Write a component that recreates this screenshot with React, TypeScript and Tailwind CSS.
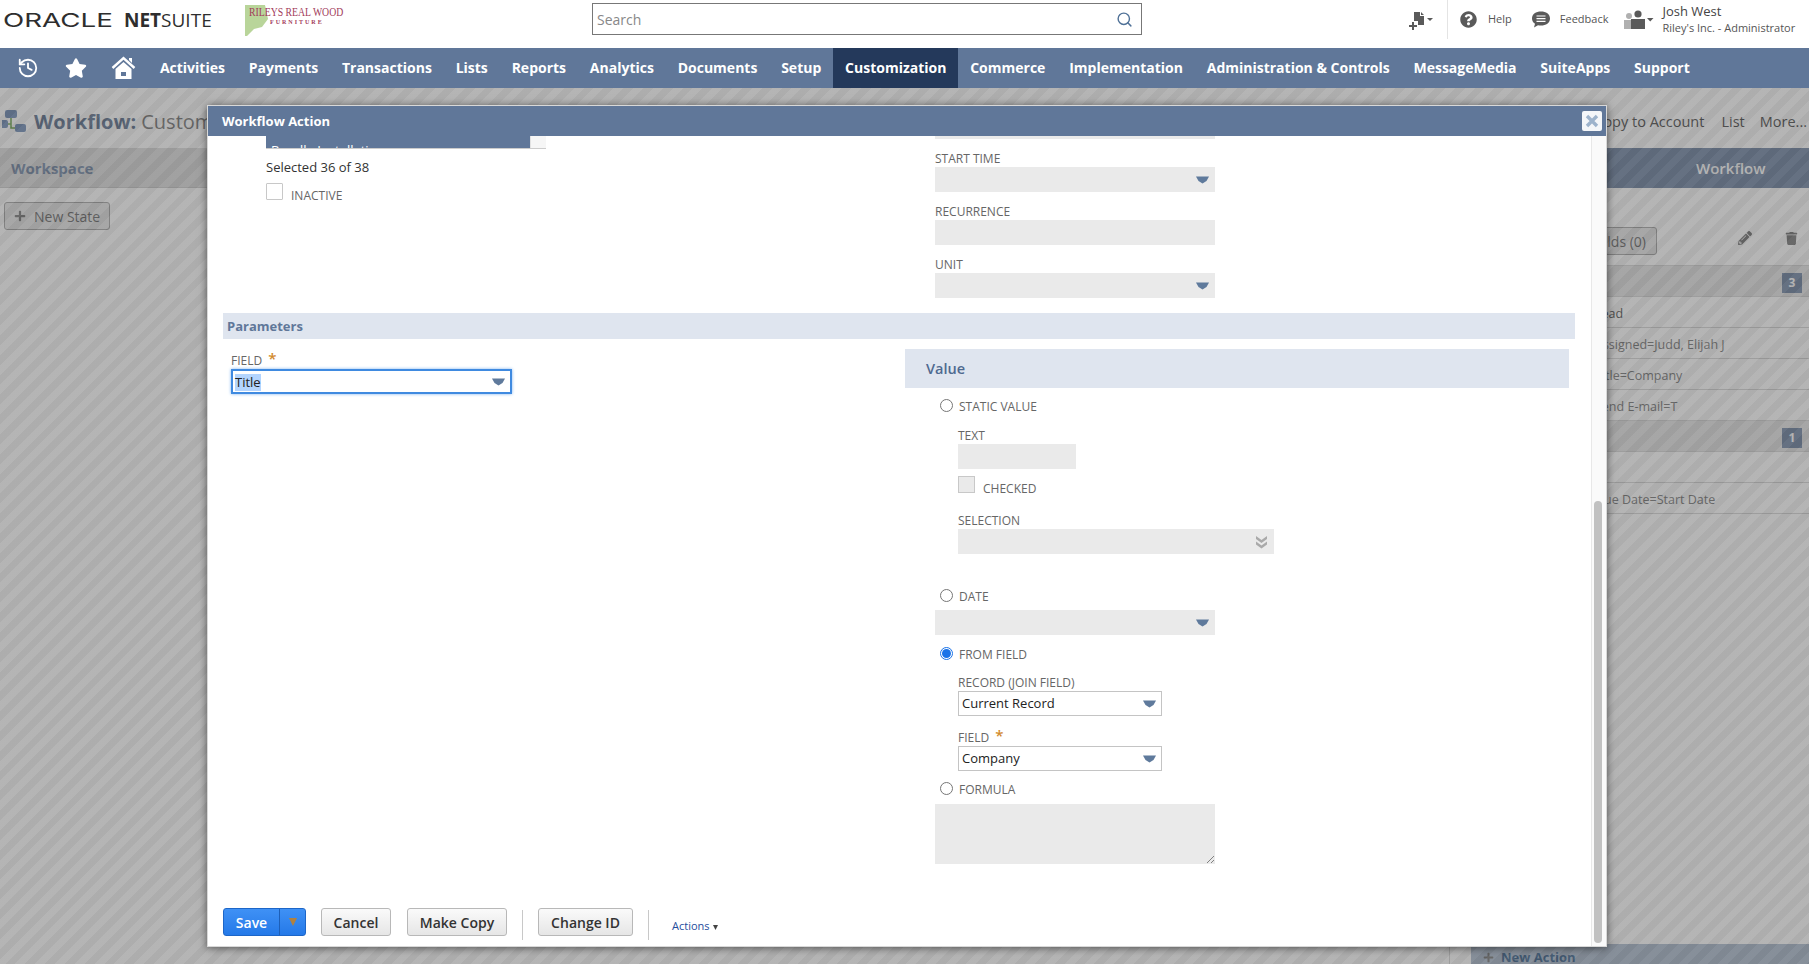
import { FaPencilAlt, FaPlus, FaStar, FaTrash, FaQuestionCircle } from 'react-icons/fa'
import { History, Search } from 'lucide-react'

const navItems = ['Activities', 'Payments', 'Transactions', 'Lists', 'Reports', 'Analytics', 'Documents', 'Setup', 'Customization', 'Commerce', 'Implementation', 'Administration & Controls', 'MessageMedia', 'SuiteApps', 'Support']

const Arrow = () => (
  <svg width="13" height="8" viewBox="0 0 13 8" className="shrink-0">
    <path d="M0 0.5 H13 L10.5 5 L6.5 7.5 L2.5 5 Z" fill="#5f7a9c" />
  </svg>
)

const Label = ({ text, required }: { text: string; required?: boolean }) => (
  <div className="h-[18px] leading-[20px] text-[12px] text-[#666] flex">
    {text}
    {required && <span className="ml-[6px] text-[#d28a2c] text-[15px] leading-[15px] font-semibold">*</span>}
  </div>
)

const GreyBox = ({ width, arrow }: { width: string; arrow?: boolean }) => (
  <div className={`${width} h-[25px] bg-[#eaeaea] flex items-center justify-end pr-[6px]`}>
    {arrow && <Arrow />}
  </div>
)

const SelectBox = ({ value }: { value: string }) => (
  <div className="w-[204px] h-[25px] border border-[#c4c4c4] bg-white flex items-center justify-between pl-[3px] pr-[5px] text-[13px] text-[#222]">
    {value}
    <Arrow />
  </div>
)

const Radio = ({ text, checked }: { text: string; checked?: boolean }) => (
  <div className="h-[18px] flex items-center pl-[35px] text-[12px] text-[#666]">
    {checked ? (
      <span className="w-[13px] h-[13px] rounded-full border border-[#1a73e8] flex items-center justify-center mr-[6px] -mt-[2px]">
        <span className="w-[9px] h-[9px] rounded-full bg-[#1a73e8]" />
      </span>
    ) : (
      <span className="w-[13px] h-[13px] rounded-full border border-[#767676] bg-white mr-[6px] -mt-[2px]" />
    )}
    <span className="mt-[2px]">{text}</span>
  </div>
)

const FooterButton = ({ text, width }: { text: string; width: string }) => (
  <button
    type="button"
    className={`${width} h-[28px] rounded-[3px] border border-[#b8b8b8] bg-gradient-to-b from-[#fafafa] to-[#e6e6e6] text-[14px] font-semibold text-[#333]`}
  >
    {text}
  </button>
)

const PanelRow = ({ text, dark }: { text: string; dark?: boolean }) => (
  <div className={`h-[31px] border-b border-[#d0d0d0] pl-[145px] pt-[4px] flex items-center text-[12.5px] ${dark ? 'text-[#333]' : 'text-[#666]'}`}>
    {text}
  </div>
)

const PanelHead = ({ count }: { count: string }) => (
  <div className="h-[31px] border-b border-[#d0d0d0] bg-[#e2e2e2] flex items-center justify-end pr-[7px] pt-[3px]">
    <span className="w-[20px] h-[20px] bg-[#607799] text-white text-[12px] font-bold flex items-center justify-center">{count}</span>
  </div>
)

export default function App() {
  return (
    <div className="h-[964px] w-[1809px] overflow-hidden flex flex-col bg-white font-['Open_Sans',sans-serif]">
      {/* top bar */}
      <div className="h-[48px] flex items-start shrink-0">
        <div className="flex items-center h-[40px] pl-[3px] w-[245px] text-[#2e2e2e] text-[19px] leading-none">
          <span className="font-['Inter',sans-serif] font-normal scale-x-[1.46] origin-left w-[121px]">ORACLE</span>
          <span className="font-bold">NET</span>
          <span className="font-normal">SUITE</span>
        </div>
        <div className="relative w-[100px] h-[36px] mt-[3px] shrink-0">
          <svg width="24" height="31" viewBox="0 0 24 31" className="absolute left-0 top-[2px]">
            <path d="M0 0 H20 L23 14 L17 22 L9 24 L2 31 H0 Z" fill="#b9d59a" />
          </svg>
          <div className="absolute left-[4px] top-[1px] whitespace-nowrap font-['Liberation_Serif',serif] text-[13px] leading-[16px] text-[#a23a5a] scale-x-[0.75] origin-left">RILEYS REAL WOOD</div>
          <div className="absolute left-[25px] top-[15px] whitespace-nowrap font-['Liberation_Serif',serif] text-[6px] font-bold tracking-[2px] text-[#a23a5a]">FURNITURE</div>
        </div>
        <div className="ml-[247px] mt-[3px] w-[550px] h-[32px] border border-[#777] flex items-center justify-between pl-[4px] pr-[8px] text-[14px] text-[#888] shrink-0">
          Search
          <Search size={17} strokeWidth={2} color="#4f7197" />
        </div>
        <div className="ml-[267px] flex items-center h-[39px] text-[#555]">
          <svg width="24" height="20" viewBox="0 0 24 20" className="mt-[2px]">
            <path d="M5 1 H11 V5 H15 V14 H9 V10 H5 Z M12 1 L15 4 H12 Z" fill="#5a5a5a" />
            <path d="M3 11 H5 V14 H8 V16 H5 V19 H3 V16 H0 V14 H3 Z" fill="#5a5a5a" />
            <path d="M18 7 H24 L21 10 Z" fill="#5a5a5a" />
          </svg>
          <div className="w-px h-[39px] bg-[#e4e4e4] ml-[14px]" />
          <FaQuestionCircle size={17} color="#5a5a5a" className="ml-[12px]" />
          <span className="ml-[11px] text-[11px]">Help</span>
          <svg width="18" height="17" viewBox="0 0 18 17" className="ml-[20px]">
            <path d="M9 0.5 C14 0.5 18 3 18 7.5 C18 12 14 14.5 9 14.5 C8 14.5 7 14.4 6 14.2 L2 16.5 L3 12.8 C1 11.5 0 9.7 0 7.5 C0 3 4 0.5 9 0.5 Z" fill="#5a5a5a" />
            <path d="M4.5 5 H13.5 M4.5 7.7 H13.5 M4.5 10.4 H13.5" stroke="#fff" strokeWidth="1.2" />
          </svg>
          <span className="ml-[10px] text-[11px]">Feedback</span>
          <svg width="30" height="20" viewBox="0 0 30 20" className="ml-[16px]">
            <circle cx="5" cy="6" r="3" fill="#b0b0b0" />
            <path d="M0 10 H9 V19 H0 Z" fill="#b0b0b0" />
            <circle cx="14" cy="4" r="3.6" fill="#5a5a5a" />
            <path d="M7 9 H21 V19 H7 Z" fill="#5a5a5a" />
            <path d="M23 8 H29.5 L26.2 11.5 Z" fill="#5a5a5a" />
          </svg>
          <div className="ml-[8px] flex flex-col -mt-[1px]">
            <span className="text-[13px] leading-[16px] text-[#444]">Josh West</span>
            <span className="text-[11px] leading-[17px]">Riley's Inc. - Administrator</span>
          </div>
        </div>
      </div>

      {/* nav */}
      <div className="h-[40px] bg-[#607799] flex items-center text-white shrink-0">
        <History size={22} strokeWidth={2} className="ml-[17px]" />
        <FaStar size={22} className="ml-[26px]" />
        <svg width="25" height="24" viewBox="0 0 25 24" className="ml-[24px]">
          <path d="M1.5 12 L12.5 2 L23.5 12" fill="none" stroke="#fff" strokeWidth="2.4" />
          <path d="M18 2 H21 V7 L18 4 Z" fill="#fff" />
          <path d="M4.5 13 L12.5 6 L20.5 13 V23 H4.5 Z M10 16 V20 H15 V16 Z" fill="#fff" fillRule="evenodd" />
        </svg>
        <div className="ml-[12px] flex h-full text-[14px] font-bold">
          {navItems.map((item) => (
            <div key={item} className={`px-[11.9px] pb-[2px] flex items-center whitespace-nowrap ${item === 'Customization' ? 'bg-[#24395b]' : ''}`}>
              {item}
            </div>
          ))}
        </div>
      </div>

      {/* page under the dialog */}
      <div className="relative flex-1 flex flex-col min-h-0">
        <div className="h-[60px] shrink-0 flex items-center justify-between text-[14.5px] text-[#333] pl-[2px] pr-[2px] pt-[8px]">
          <div className="flex items-center">
            <svg width="24" height="26" viewBox="0 0 24 26">
              <path d="M9 8 V19 H14 M3 15 H9" stroke="#5c9a3a" strokeWidth="1.6" fill="none" />
              <rect x="3" y="1" width="12" height="8" rx="2" fill="#5f7fae" />
              <rect x="-2" y="11" width="8" height="8" rx="2" fill="#5f7fae" />
              <rect x="13" y="15" width="11" height="8" rx="2" fill="#5f7fae" />
            </svg>
            <span className="ml-[8px] text-[20px] font-bold text-[#4a5f80]">Workflow:</span>
            <span className="ml-[5px] text-[20px] text-[#666]">Customer</span>
          </div>
          <div className="flex">
            <span>Copy to Account</span>
            <span className="ml-[17px]">List</span>
            <span className="ml-[15px]">More...</span>
          </div>
        </div>
        <div className="flex-1 flex min-h-0">
          <div className="flex-1 flex flex-col">
            <div className="h-[40px] bg-[#d8d8d8] border-b border-[#c4c4c4] flex items-center pl-[11px] pt-[2px] text-[15px] font-bold text-[#607799]">Workspace</div>
            <button type="button" className="ml-[4px] mt-[14px] w-[106px] h-[28px] rounded-[3px] border border-[#999] bg-[#e4e4e4] flex items-center pl-[9px] text-[14px] text-[#555]">
              <FaPlus size={12} className="mr-[8px] text-[#666]" />
              New State
            </button>
          </div>
          <div className="w-[360px] flex flex-col border-l border-[#d0d0d0]">
            <div className="h-[40px] shrink-0 bg-[#607799] flex items-center pl-[246px] text-[15px] font-semibold text-white">Workflow</div>
            <div className="h-[78px] shrink-0 pt-[39px] pl-[51px] flex items-start border-b border-[#d0d0d0]">
              <div className="w-[156px] h-[28px] rounded-[3px] border border-[#999] bg-[#e4e4e4] text-[14px] text-[#555] flex items-center justify-end pr-[10px]">Fields (0)</div>
              <FaPencilAlt size={14} className="ml-[81px] mt-[4px] text-[#666]" />
              <FaTrash size={13} className="ml-[33px] mt-[5px] text-[#666]" />
            </div>
            <PanelHead count="3" />
            <PanelRow text="Lead" dark />
            <PanelRow text="Assigned=Judd, Elijah J" />
            <PanelRow text="Title=Company" />
            <PanelRow text="Send E-mail=T" />
            <PanelHead count="1" />
            <PanelRow text="" />
            <PanelRow text="Due Date=Start Date" />
            <div className="mt-auto ml-[21px] h-[20px] bg-[#a3b4c9] flex items-center pl-[12px] pt-[7px] text-[13px] font-bold text-[#24507f]">
              <FaPlus size={11} className="mr-[7px] text-[#666]" />
              New Action
            </div>
          </div>
        </div>

        {/* striped mask */}
        <div className="absolute inset-0 bg-[repeating-linear-gradient(135deg,rgba(107,107,107,0.5)_0px,rgba(107,107,107,0.5)_7px,rgba(92,92,92,0.5)_7px,rgba(92,92,92,0.5)_14px)]" />

        {/* dialog */}
        <div className="absolute left-[207px] top-[17px] w-[1400px] h-[842px] bg-white border border-[#d8d8d8] shadow-[0_1px_8px_rgba(0,0,0,0.55)] flex flex-col">
          <div className="h-[30px] shrink-0 bg-[#607799] flex items-center pl-[14px] pt-[1px] text-[13px] font-bold text-white relative z-10">
            Workflow Action
            <div className="absolute right-[4px] top-[5px] w-[20px] h-[20px] rounded-[2px] bg-[#f4f6f9] flex items-center justify-center">
              <svg width="14" height="14" viewBox="0 0 14 14">
                <path d="M2 2 L12 12 M12 2 L2 12" stroke="#9db3cc" strokeWidth="3.4" />
              </svg>
            </div>
          </div>
          <div className="flex-1 flex min-h-0">
            <div className="flex-1 flex flex-col min-w-0 pl-[15px] pr-[16px]">
              <div className="flex-1 min-h-0 overflow-hidden">
                <div className="h-[177px] flex">
                  <div className="w-[712px] pl-[43px]">
                    <div className="w-[280px] h-[13px] flex border-b border-[#ccc] overflow-hidden">
                      <div className="w-[264px] bg-[#607799] pl-[5px] pt-[5px] text-[13px] leading-[18px] text-white">Bundle Installation</div>
                      <div className="w-[16px] bg-[#f6f6f6] border-l border-[#e2e2e2]" />
                    </div>
                    <div className="mt-[9px] h-[18px] leading-[18px] text-[13px] text-[#333]">Selected 36 of 38</div>
                    <div className="mt-[7px] flex">
                      <span className="w-[17px] h-[17px] border border-[#c8c8c8] rounded-[1px]" />
                      <span className="ml-[8px] mt-[4px] text-[12px] leading-[18px] text-[#666]">INACTIVE</span>
                    </div>
                  </div>
                  <div className="w-[280px]">
                    <div className="h-[3px] bg-[#eaeaea]" />
                    <div className="mt-[10px]"><Label text="START TIME" /><GreyBox width="w-[280px]" arrow /></div>
                    <div className="mt-[10px]"><Label text="RECURRENCE" /><GreyBox width="w-[280px]" /></div>
                    <div className="mt-[10px]"><Label text="UNIT" /><GreyBox width="w-[280px]" arrow /></div>
                  </div>
                </div>
                <div className="h-[26px] bg-[#dfe5ef] flex items-center pl-[4px] pt-[2px] text-[13px] font-bold text-[#607799]">Parameters</div>
                <div className="mt-[10px] flex">
                  <div className="w-[682px] pl-[8px] pt-[2px]">
                    <Label text="FIELD" required />
                    <div className="w-[281px] h-[25px] border-2 border-[#3f8ae0] shadow-[0_0_3px_#7fb2ee] bg-white flex items-center justify-between pl-[2px] pr-[5px] text-[13px] text-[#222]">
                      <span className="bg-[#b4d5fe] mt-[2px] leading-[17px]">Title</span>
                      <Arrow />
                    </div>
                  </div>
                  <div className="w-[664px]">
                    <div className="h-[39px] bg-[#dfe5ef] flex items-center pl-[21px] text-[14.5px] font-semibold text-[#4f6a90]">Value</div>
                    <div className="mt-[9px]"><Radio text="STATIC VALUE" /></div>
                    <div className="mt-[11px] pl-[53px]">
                      <Label text="TEXT" />
                      <GreyBox width="w-[118px]" />
                      <div className="mt-[7px] flex">
                        <span className="w-[17px] h-[17px] border border-[#c8c8c8] bg-[#eaeaea]" />
                        <span className="ml-[8px] mt-[4px] text-[12px] leading-[18px] text-[#666]">CHECKED</span>
                      </div>
                      <div className="mt-[13px]">
                        <Label text="SELECTION" />
                        <div className="w-[316px] h-[25px] bg-[#eaeaea] flex items-center justify-end pr-[6px]">
                          <svg width="13" height="14" viewBox="0 0 13 14">
                            <path d="M1 1 L6.5 5 L12 1 V4 L6.5 8 L1 4 Z M1 6.5 L6.5 10.5 L12 6.5 V9.5 L6.5 13.5 L1 9.5 Z" fill="#a9a9a9" />
                          </svg>
                        </div>
                      </div>
                    </div>
                    <div className="mt-[33px]"><Radio text="DATE" /></div>
                    <div className="mt-[5px] pl-[30px]"><GreyBox width="w-[280px]" arrow /></div>
                    <div className="mt-[10px]"><Radio text="FROM FIELD" checked /></div>
                    <div className="mt-[10px] pl-[53px]">
                      <Label text="RECORD (JOIN FIELD)" />
                      <SelectBox value="Current Record" />
                      <div className="mt-[12px]">
                        <Label text="FIELD" required />
                        <SelectBox value="Company" />
                      </div>
                    </div>
                    <div className="mt-[9px]"><Radio text="FORMULA" /></div>
                    <div className="mt-[6px] ml-[30px] w-[280px] h-[60px] bg-[#eaeaea] flex items-end justify-end">
                      <svg width="9" height="9" viewBox="0 0 9 9">
                        <path d="M1 8 L8 1 M5 8 L8 5" stroke="#666" strokeWidth="0.8" />
                      </svg>
                    </div>
                  </div>
                </div>
              </div>
              <div className="shrink-0 flex items-start pb-[6px]">
                <div className="w-[83px] h-[28px] rounded-[3px] border border-[#1d66c8] bg-gradient-to-b from-[#3f91f5] to-[#2479e8] flex text-[14px] font-semibold text-white">
                  <span className="w-[56px] flex items-center justify-center border-r border-[#1d5fb8]">Save</span>
                  <span className="flex-1 flex items-center justify-center">
                    <svg width="8" height="8" viewBox="0 0 8 8"><path d="M0 0 H8 L4 8 Z" fill="#b0813f" /></svg>
                  </span>
                </div>
                <div className="ml-[15px]"><FooterButton text="Cancel" width="w-[70px]" /></div>
                <div className="ml-[16px]"><FooterButton text="Make Copy" width="w-[100px]" /></div>
                <div className="ml-[15px] mt-[2px] w-px h-[30px] bg-[#c8c8c8]" />
                <div className="ml-[15px]"><FooterButton text="Change ID" width="w-[95px]" /></div>
                <div className="ml-[15px] mt-[2px] w-px h-[30px] bg-[#c8c8c8]" />
                <div className="ml-[23px] mt-[10px] flex items-center text-[11px] leading-[16px] text-[#1f4d9c]">
                  Actions
                  <svg width="5" height="5" viewBox="0 0 5 5" className="ml-[3px] mt-[2px]"><path d="M0 0 H5 L2.5 5 Z" fill="#444" /></svg>
                </div>
              </div>
            </div>
            {/* scrollbar */}
            <div className="w-[15px] shrink-0 border-l border-[#e8e8e8] bg-[#fafafa] pl-[2px] pt-[365px] pb-[3px]">
              <div className="w-[8px] h-full rounded-[4px] bg-[#c1c1c1]" />
            </div>
          </div>
        </div>
      </div>
    </div>
  )
}
